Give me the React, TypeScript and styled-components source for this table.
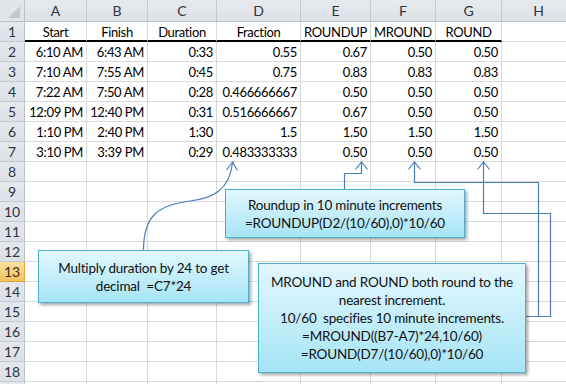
import React from 'react';
import styled, { createGlobalStyle } from 'styled-components';

const GlobalStyle = createGlobalStyle`
  html, body {
    margin: 0;
    padding: 0;
    overflow: hidden;
    background: #ffffff;
  }
  body {
    font-family: Lato, 'Open Sans', sans-serif;
  }
`;

const colWidths = [25, 62, 61, 69, 84, 70, 65, 66, 74];
const colLetters = ['A', 'B', 'C', 'D', 'E', 'F', 'G', 'H'];

const headers = ['Start', 'Finish', 'Duration', 'Fraction', 'ROUNDUP', 'MROUND', 'ROUND'];

const data: string[][] = [
  ['6:10 AM', '6:43 AM', '0:33', '0.55', '0.67', '0.50', '0.50'],
  ['7:10 AM', '7:55 AM', '0:45', '0.75', '0.83', '0.83', '0.83'],
  ['7:22 AM', '7:50 AM', '0:28', '0.466666667', '0.50', '0.50', '0.50'],
  ['12:09 PM', '12:40 PM', '0:31', '0.516666667', '0.67', '0.50', '0.50'],
  ['1:10 PM', '2:40 PM', '1:30', '1.5', '1.50', '1.50', '1.50'],
  ['3:10 PM', '3:39 PM', '0:29', '0.483333333', '0.50', '0.50', '0.50'],
];

// 18 numbered rows, plus the sliver of the next one at the bottom edge
const ROW_COUNT = 19;
const LABELLED_ROWS = 18;
const ACTIVE_ROW = 13;

export default function App() {
  const rows = Array.from({ length: ROW_COUNT }, (_, i) => i + 1);

  return (
    <>
      <GlobalStyle />
      <Workbook>
        <Sheet>
          <Corner>
            <svg width="25" height="22" viewBox="0 0 25 22">
              <polygon points="20,6 20,18 8,18" fill="#c3c8cf" />
            </svg>
          </Corner>
          {colLetters.map((c) => (
            <ColHead key={c}>{c}</ColHead>
          ))}
          {rows.map((r) => (
            <React.Fragment key={r}>
              <RowHead $active={r === ACTIVE_ROW}>{r <= LABELLED_ROWS ? r : ''}</RowHead>
              {colLetters.map((c, ci) => {
                if (r === 1) {
                  return (
                    <Cell key={c} $align="center" $underline={ci < 7}>
                      {headers[ci] ?? ''}
                    </Cell>
                  );
                }
                const row = data[r - 2];
                return (
                  <Cell key={c} $align="right">
                    {row ? row[ci] ?? '' : ''}
                  </Cell>
                );
              })}
            </React.Fragment>
          ))}
        </Sheet>

        <Connectors width="566" height="384" viewBox="0 0 566 384">
          <g fill="none" stroke="#4a7ebb" strokeWidth="1.2">
            <path d="M143.5,250 C143.5,214 160,205 190,201 C214,198 229,190 232.5,163" />
            <polyline points="226.5,170 232.5,162 237.5,170.5" />

            <path d="M344.5,189 V173.5 H361.5 V162" />
            <polyline points="355.5,169.5 361.5,162 367.5,169.5" />

            <path d="M414.5,162 V182.5 H538.5 V316.5 H526" />
            <polyline points="408.5,169.5 414.5,162 420.5,169.5" />

            <path d="M483.5,162 V213.5 H550.5 V316.5 H526" />
            <polyline points="477.5,169.5 483.5,162 489.5,169.5" />
          </g>
        </Connectors>

        <Callout $left={225} $top={189} $width={240} $height={49}>
          <span>Roundup in 10 minute increments</span>
          <span>=ROUNDUP(D2/(10/60),0)*10/60</span>
        </Callout>

        <Callout $left={38} $top={250} $width={211} $height={53}>
          <span>Multiply duration by 24 to get</span>
          <span>decimal&nbsp;&nbsp;=C7*24</span>
        </Callout>

        <Callout $left={258} $top={263} $width={268} $height={110}>
          <span>MROUND and ROUND both round to the</span>
          <span>nearest increment.</span>
          <span>10/60&nbsp;&nbsp;specifies 10 minute increments.</span>
          <span>=MROUND((B7-A7)*24,10/60)</span>
          <span>=ROUND(D7/(10/60),0)*10/60</span>
        </Callout>
      </Workbook>
    </>
  );
}

const Workbook = styled.div`
  position: relative;
  width: 566px;
  height: 384px;
  overflow: hidden;
`;

const Sheet = styled.div`
  display: grid;
  grid-template-columns: ${colWidths.map((w) => `${w}px`).join(' ')};
  grid-template-rows: 22px repeat(${ROW_COUNT}, 20px);
  color: #000;
`;

const Corner = styled.div`
  background: #e1e5ea;
  border-right: 1px solid #bcc2c9;
  border-bottom: 1px solid #bcc2c9;
  box-sizing: border-box;
  line-height: 0;
`;

const ColHead = styled.div`
  background: linear-gradient(#e6e9ee, #dde1e7);
  border-right: 1px solid #c4c9d0;
  border-bottom: 1px solid #bcc2c9;
  box-sizing: border-box;
  display: flex;
  align-items: center;
  justify-content: center;
  color: #2f3640;
  font-size: 14px;
`;

const RowHead = styled.div<{ $active?: boolean }>`
  background: ${(p) =>
    p.$active ? 'linear-gradient(#fadf9f, #f3c360)' : 'linear-gradient(#e4e7ec, #dde1e7)'};
  border-right: 1px solid ${(p) => (p.$active ? '#e0a43a' : '#bcc2c9')};
  border-bottom: 1px solid ${(p) => (p.$active ? '#e0a43a' : '#c4c9d0')};
  box-sizing: border-box;
  display: flex;
  align-items: center;
  justify-content: center;
  color: ${(p) => (p.$active ? '#3a2a10' : '#2f3640')};
  font-size: 14px;
`;

const Cell = styled.div<{ $align: 'left' | 'center' | 'right'; $underline?: boolean }>`
  border-right: 1px solid #d9d9d9;
  border-bottom: ${(p) => (p.$underline ? '2px solid #000' : '1px solid #d9d9d9')};
  box-sizing: border-box;
  display: flex;
  align-items: center;
  justify-content: ${(p) =>
    p.$align === 'right' ? 'flex-end' : p.$align === 'center' ? 'center' : 'flex-start'};
  padding: ${(p) => (p.$underline ? '1px 3px 0' : '0 3px')};
  font-size: 13px;
  letter-spacing: -0.35px;
  white-space: nowrap;
  overflow: visible;
`;

const Connectors = styled.svg`
  position: absolute;
  left: 0;
  top: 0;
  pointer-events: none;
`;

const Callout = styled.div<{ $left: number; $top: number; $width: number; $height: number }>`
  position: absolute;
  left: ${(p) => p.$left}px;
  top: ${(p) => p.$top}px;
  width: ${(p) => p.$width}px;
  height: ${(p) => p.$height}px;
  box-sizing: border-box;
  border: 1px solid #47b1cf;
  background: linear-gradient(#e2f7fc, #a6e4f6);
  box-shadow: 2px 2px 3px rgba(0, 0, 0, 0.35);
  display: flex;
  flex-direction: column;
  align-items: center;
  justify-content: center;
  font-size: 13.5px;
  letter-spacing: -0.2px;
  line-height: 18px;
  color: #111;
  white-space: nowrap;
`;
